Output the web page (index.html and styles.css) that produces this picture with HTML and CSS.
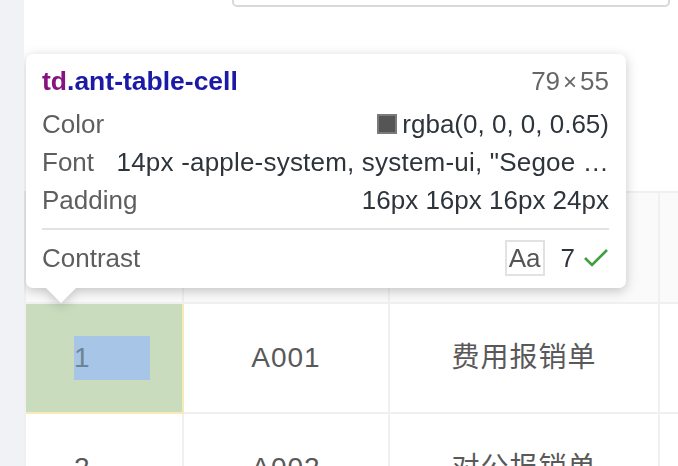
FILE: index.html
```html
<!DOCTYPE html>
<html lang="zh-CN">
<head>
<meta charset="utf-8">
<title>Inspect</title>
<link rel="stylesheet" href="styles.css">
</head>
<body>
<div class="page">
  <aside class="side"></aside>
  <main class="main">
    <div class="toolbar"><div class="search"></div></div>
    <div class="table">
      <div class="tr thead">
        <div class="td first"></div><div class="td"></div><div class="td"></div><div class="td"></div>
      </div>
      <div class="tr">
        <div class="td first hl"><span class="hl-content">1</span></div>
        <div class="td c">A001</div>
        <div class="td c">费用报销单</div>
        <div class="td"></div>
      </div>
      <div class="tr">
        <div class="td first"><span class="cell-text">2</span></div>
        <div class="td c">A002</div>
        <div class="td c">对公报销单</div>
        <div class="td"></div>
      </div>
    </div>

    <div class="tip">
      <div class="tip-row title-row">
        <span class="sel"><span class="tag">td</span><span class="cls">.ant-table-cell</span></span>
        <span class="dims">79<span class="times">×</span>55</span>
      </div>
      <div class="tip-row">
        <span class="lbl">Color</span>
        <span class="val"><span class="swatch"></span>rgba(0, 0, 0, 0.65)</span>
      </div>
      <div class="tip-row">
        <span class="lbl">Font</span>
        <span class="val font-val">14px -apple-system, system-ui, "Segoe …</span>
      </div>
      <div class="tip-row">
        <span class="lbl">Padding</span>
        <span class="val">16px 16px 16px 24px</span>
      </div>
      <div class="sep"></div>
      <div class="tip-row">
        <span class="lbl">Contrast</span>
        <span class="val contrast">
          <span class="aa">Aa</span>
          <span class="ratio">7</span>
          <svg class="check" width="26" height="20" viewBox="0 0 26 20"><polyline points="2,10 9,17 24,2" fill="none" stroke="#3f9f3f" stroke-width="2.6"/></svg>
        </span>
      </div>
    </div>
  </main>
</div>
</body>
</html>
```

FILE: styles.css
```css
* { box-sizing: border-box; }
html, body { margin: 0; padding: 0; background: #fff; }
body { width: 678px; height: 466px; overflow: hidden; font-family: "Liberation Sans", "Noto Sans CJK SC", sans-serif; }

.page { display: flex; width: 678px; height: 466px; }
.side { width: 24px; flex: none; background: #f0f2f5; }
.main { flex: 1; position: relative; overflow: hidden; }

.toolbar { display: flex; align-items: flex-start; height: 191px; padding-left: 208px; }
.search {
  width: 438px; height: 42px; margin-top: -35px; flex: none;
  border: 2px solid #d9d9d9; border-radius: 5px; background: #fff;
}

.table { border-top: 2px solid #f0f0f0; border-left: 2px solid #f0f0f0; width: 900px; }
.tr { display: grid; grid-template-columns: 158px 206px 270px 264px; height: 110px; }
.thead { height: 111px; background: #fafafa; }
.td {
  border-right: 2px solid #f0f0f0; border-bottom: 2px solid #f0f0f0;
  padding: 32px; line-height: 44px; font-size: 28px; color: #595959;
  white-space: nowrap; letter-spacing: 1px;
}
.td.first { padding-left: 48px; }
.td.c { text-align: center; }
.td.hl { background: #c9dcbe; border-color: #f8e9b9; }
.hl-content { display: block; height: 44px; background: #a7c5e6; color: #6e8298; }

.tip {
  position: absolute; left: 2px; top: 54px; width: 600px; height: 234px;
  background: #fff; border-radius: 7px;
  padding: 8px 17px 11px 16px;
  filter: drop-shadow(0 3px 6px rgba(0,0,0,0.22));
  font-size: 26px; color: #5e5e5e;
}
.tip::after {
  content: ""; position: absolute; left: 20px; top: 100%;
  border-left: 15px solid transparent; border-right: 15px solid transparent;
  border-top: 15px solid #fff;
}
.tip-row { display: flex; justify-content: space-between; align-items: center; height: 38px; line-height: 38px; white-space: nowrap; }
.title-row { margin-bottom: 5px; }
.sel { font-weight: bold; font-size: 26.5px; }
.tag { color: #881280; }
.cls { color: #1a1aa6; }
.dims { color: #666; }
.times { padding: 0 3px; font-size: 24px; }
.lbl { color: #5e5e5e; }
.val { color: #2e343b; display: flex; align-items: center; }
.font-val { letter-spacing: 0.2px; }
.swatch { width: 20px; height: 20px; background: #555; border: 2px solid #7a7a7a; margin-right: 5px; }
.sep { height: 2px; background: #e2e2e2; margin: 9px 0; }
.contrast { height: 38px; }
.aa { display: block; height: 36px; line-height: 32px; padding: 0 2px; border: 2px solid #e2e2e2; color: #555; }
.ratio { margin-left: 16px; margin-right: 8px; color: #2e343b; }
.check { display: block; }
```
